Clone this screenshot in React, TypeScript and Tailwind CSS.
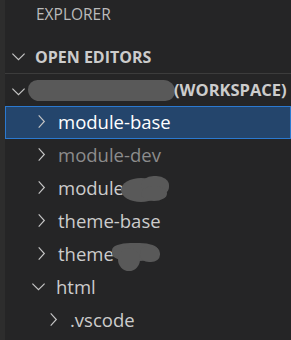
import React from "react";

const font = { fontFamily: '"Open Sans", "Noto Sans", sans-serif' };

function Chevron({ open = false, className = "" }: { open?: boolean; className?: string }) {
  return (
    <svg width="15" height="15" viewBox="0 0 16 16" className={className} fill="none" stroke="currentColor" strokeWidth="1.25">
      {open ? <polyline points="1.5,5 8,11.5 14.5,5" /> : <polyline points="5,1.5 11,8 5,14.5" />}
    </svg>
  );
}

type Row = { label: string; blob?: "a" | "b"; depth: number; open?: boolean; dim?: boolean; selected?: boolean };

const rows: Row[] = [
  { label: "module-base", depth: 1, selected: true },
  { label: "module-dev", depth: 1, dim: true },
  { label: "module", blob: "a", depth: 1 },
  { label: "theme-base", depth: 1 },
  { label: "theme", blob: "b", depth: 1 },
  { label: "html", depth: 1, open: true },
  { label: ".vscode", depth: 2 },
];

// the grey smudges that hide names in the screenshot
function Blob({ kind }: { kind: "a" | "b" }) {
  if (kind === "a")
    return (
      <span className="relative -ml-[3px] mt-[3px] inline-block h-[27px] w-[48px]">
        <span className="absolute left-0 top-[2px] h-[24px] w-[40px] rounded-[50%] bg-[#595959]" />
        <span className="absolute right-0 top-0 h-[20px] w-[28px] rounded-[45%] bg-[#595959]" />
        <span className="absolute right-[2px] top-[10px] h-[15px] w-[26px] rounded-[50%] bg-[#595959]" />
      </span>
    );
  return (
    <span className="relative -ml-[2px] mt-[5px] inline-block h-[29px] w-[48px]">
      <span className="absolute left-0 top-[1px] h-[18px] w-[46px] rounded-[40%] bg-[#595959]" />
      <span className="absolute left-[6px] top-[6px] h-[23px] w-[22px] rounded-[50%] bg-[#595959]" />
      <span className="absolute right-0 top-[4px] h-[16px] w-[20px] rounded-[45%] bg-[#595959]" />
    </span>
  );
}

export default function App() {
  return (
    <div className="flex h-[340px] w-[291px] overflow-hidden bg-[#252526] text-[#cccccc]" style={font}>
      <div className="w-[5px] shrink-0 bg-[#2d2d2d]" />
      <div className="flex min-w-0 flex-1 flex-col">
        <div className="flex h-[30px] items-center pl-[31px] text-[15.5px] text-[#bbbbbb]">EXPLORER</div>
        <div className="flex h-[43px] items-center pl-[6px] pt-[10px] text-[16px] font-bold text-[#cccccc]">
          <Chevron open className="mr-[9px] text-[#c5c5c5]" />
          OPEN EDITORS
        </div>
        <div className="h-[1px] bg-[#3c3c3c]" />
        <div className="flex h-[32px] items-center whitespace-nowrap pl-[6px] text-[16.5px] font-bold">
          <Chevron open className="mr-[2px] mt-[2px] text-[#c5c5c5]" />
          <span className="mt-[1px] inline-block h-[21px] w-[147px] shrink-0 rounded-[10px_12px_10px_12px] bg-[#595959]" />
          <span className="-ml-[1px]">(WORKSPACE)</span>
        </div>
        {rows.map((r) => (
          <div
            key={r.label}
            className={
              "flex h-[33px] items-center pb-[2px] text-[18.5px] " +
              (r.selected ? "border border-[#2b79d0] bg-[#24456c] text-white " : "border border-transparent ") +
              (r.dim ? "text-[#8c8c8c]" : "")
            }
            style={{ paddingLeft: r.depth === 2 ? 40 : r.open ? 25 : 28 }}
          >
            <Chevron open={r.open} className={"text-[#c5c5c5] " + (r.open ? "mr-[10px]" : "mr-[9px]")} />
            <span>{r.label}</span>
            {r.blob ? <Blob kind={r.blob} /> : null}
          </div>
        ))}
      </div>
    </div>
  );
}
